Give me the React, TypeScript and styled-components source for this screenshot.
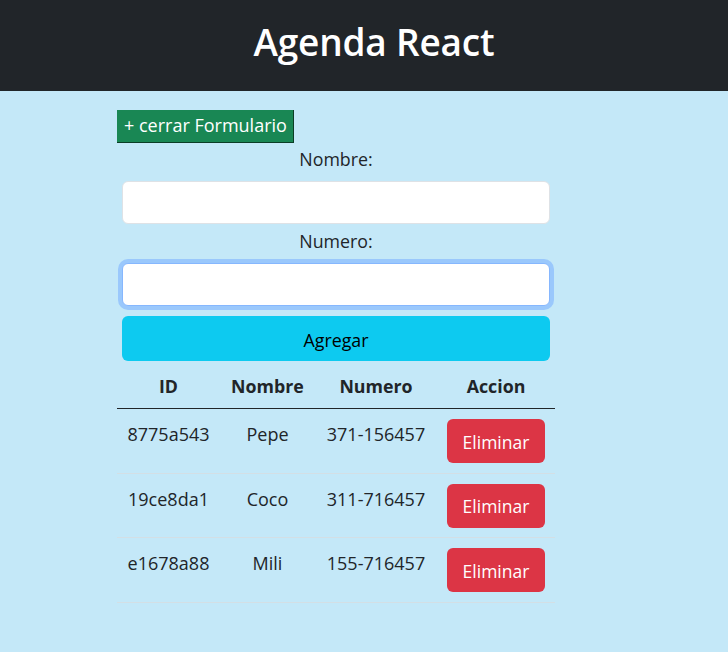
import React from "react";
import styled, { createGlobalStyle } from "styled-components";

const GlobalStyle = createGlobalStyle`
  html, body { margin: 0; padding: 0; }
  body {
    background: #c4e8f8;
    font-family: "Open Sans", "Noto Sans", sans-serif;
    color: #212529;
    min-height: 652px;
  }
  * { box-sizing: border-box; }
`;

const Header = styled.header`
  background: #212529;
  height: 91px;
  display: flex;
  align-items: center;
  justify-content: center;
`;

const Title = styled.h1`
  margin: 0 0 8px 20px;
  color: #fff;
  font-size: 37px;
  font-weight: 600;
  letter-spacing: -0.2px;
`;

const Main = styled.main`
  width: 438px;
  margin-left: 117px;
  padding-top: 19px;
`;

const ToggleButton = styled.button`
  display: block;
  height: 33px;
  padding: 0 6px 1px 7px;
  background: #198754;
  color: #fff;
  border: none;
  border-right: 1px solid #0b3d26;
  border-bottom: 1px solid #0b3d26;
  font-family: inherit;
  font-size: 18px;
  line-height: 31px;
`;

const Form = styled.form`
  display: flex;
  flex-direction: column;
  align-items: stretch;
  padding: 0 5px;
`;

const Label = styled.label<{ $top: number }>`
  text-align: center;
  font-size: 17.8px;
  line-height: 30px;
  height: 30px;
  margin: ${(p) => p.$top}px 0 7px;
`;

const Input = styled.input<{ $focused?: boolean }>`
  height: 43px;
  border-radius: 6px;
  border: 1px solid ${(p) => (p.$focused ? "#86b7fe" : "#dee2e6")};
  background: #fff;
  outline: none;
  box-shadow: ${(p) => (p.$focused ? "0 0 0 4px #9ac8fc" : "none")};
  font-family: inherit;
  font-size: 18px;
  padding: 0 12px;
`;

const SubmitButton = styled.button`
  margin-top: 10px;
  height: 45px;
  border-radius: 6px;
  border: none;
  background: #0dcaf0;
  color: #000;
  font-family: inherit;
  font-size: 17.8px;
  padding-top: 4px;
`;

const Table = styled.table`
  width: 438px;
  border-collapse: collapse;
  vertical-align: top;
  text-align: center;
  font-size: 18px;
`;

const Th = styled.th<{ $w: number }>`
  width: ${(p) => p.$w}px;
  font-weight: 700;
  font-size: 17.8px;
  padding: 10px 0 7px;
  line-height: 30px;
  border-bottom: 1px solid #212529;
`;

const Td = styled.td`
  padding: 10px 0 9.5px;
  line-height: 30px;
  vertical-align: top;
  border-bottom: 1px solid #d3dfe5;
`;

const DeleteButton = styled.button`
  width: 98px;
  height: 44px;
  border: none;
  border-radius: 6px;
  background: #dc3545;
  color: #fff;
  font-family: inherit;
  font-size: 17.5px;
  padding-top: 2px;
  vertical-align: top;
`;

const contacts = [
  { id: "8775a543", nombre: "Pepe", numero: "371-156457" },
  { id: "19ce8da1", nombre: "Coco", numero: "311-716457" },
  { id: "e1678a88", nombre: "Mili", numero: "155-716457" },
];

export default function App() {
  return (
    <>
      <GlobalStyle />
      <Header>
        <Title>Agenda React</Title>
      </Header>
      <Main>
        <ToggleButton type="button">+ cerrar Formulario</ToggleButton>
        <Form onSubmit={(e) => e.preventDefault()}>
          <Label $top={1}>Nombre:</Label>
          <Input type="text" />
          <Label $top={2}>Numero:</Label>
          <Input type="text" $focused />
          <SubmitButton type="submit">Agregar</SubmitButton>
        </Form>
        <Table>
          <thead>
            <tr>
              <Th $w={103}>ID</Th>
              <Th $w={95}>Nombre</Th>
              <Th $w={122}>Numero</Th>
              <Th $w={118}>Accion</Th>
            </tr>
          </thead>
          <tbody>
            {contacts.map((c) => (
              <tr key={c.id}>
                <Td>{c.id}</Td>
                <Td>{c.nombre}</Td>
                <Td>{c.numero}</Td>
                <Td>
                  <DeleteButton type="button">Eliminar</DeleteButton>
                </Td>
              </tr>
            ))}
          </tbody>
        </Table>
      </Main>
    </>
  );
}
